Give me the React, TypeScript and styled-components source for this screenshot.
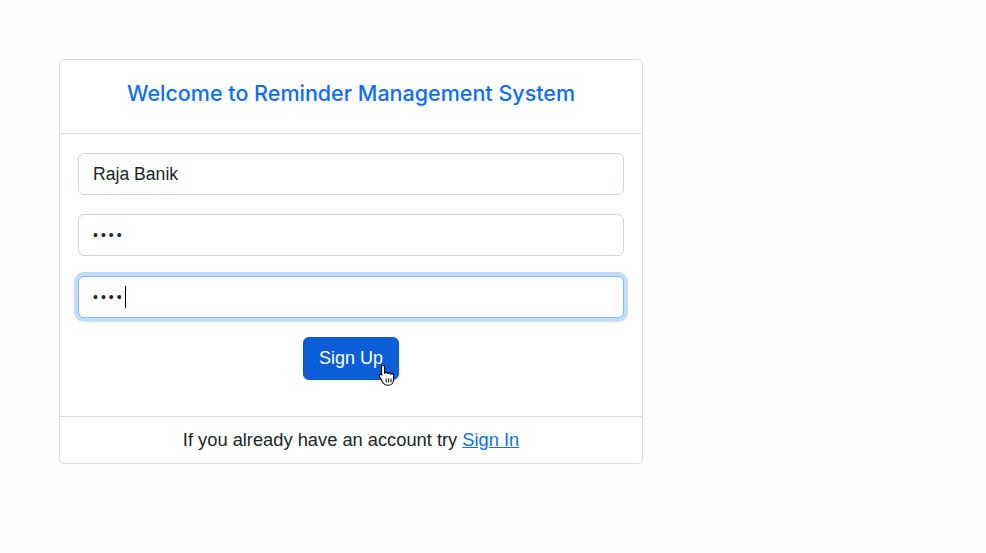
import React from 'react';
import styled, { createGlobalStyle } from 'styled-components';

const GlobalStyle = createGlobalStyle`
  body {
    margin: 0;
    background: #fdfdfd;
    font-family: "Liberation Sans", Arial, sans-serif;
    color: #212529;
  }
`

const Page = styled.div`
  padding: 59px 0 0 59px;
`
const Card = styled.div`
  width: 582px;
  border: 1px solid #dcdcdc;
  border-radius: 5px;
  background: #fff;
  display: flex;
  flex-direction: column;
`
const Header = styled.div`
  height: 73px;
  display: flex;
  align-items: center;
  justify-content: center;
  border-bottom: 1px solid #dcdcdc;
`
const Title = styled.h3`
  margin: 0 0 8px;
  font-family: Inter, "Liberation Sans", sans-serif;
  font-size: 21.5px;
  font-weight: 500;
  color: #0d6efd;
`
const Body = styled.form`
  padding: 19px 18px 36px;
  display: flex;
  flex-direction: column;
  gap: 19px;
`
const Field = styled.div`
  position: relative;
  margin-top: 1px;
`
const Input = styled.input<{ $focused?: boolean }>`
  box-sizing: border-box;
  width: 100%;
  height: 42px;
  padding: 0 14px;
  font-family: inherit;
  font-size: ${p => (p.type === 'password' ? '14px' : '17.6px')};
  color: #212529;
  background: #fff;
  border: 1px solid ${p => (p.$focused ? '#86b7fe' : '#ced4da')};
  border-radius: 6px;
  outline: none;
  box-shadow: ${p => (p.$focused ? '0 0 0 4px rgba(13, 110, 253, 0.25)' : 'none')};
  letter-spacing: ${p => (p.type === 'password' ? '3px' : 'normal')};
`
const Caret = styled.span`
  position: absolute;
  left: 47px;
  top: 10px;
  width: 1px;
  height: 22px;
  background: #000;
`
const Actions = styled.div`
  display: flex;
  justify-content: center;
`
const Button = styled.button`
  position: relative;
  height: 43px;
  padding: 0 15px;
  font-family: inherit;
  font-size: 18px;
  color: #fff;
  background: #0b5ed7;
  border: 1px solid #0a58ca;
  border-radius: 6px;
`
const Pointer = styled.svg`
  position: absolute;
  left: 74px;
  top: 26px;
`
const Footer = styled.div`
  height: 46px;
  border-top: 1px solid #dcdcdc;
  display: flex;
  align-items: center;
  justify-content: center;
  font-size: 18.3px;
  gap: 5px;
`
const Link = styled.a`
  color: #0d6efd;
  text-decoration: underline;
`

export default function App() {
  return (
    <>
      <GlobalStyle />
      <Page>
        <Card>
          <Header><Title>Welcome to Reminder Management System</Title></Header>
          <Body onSubmit={e => e.preventDefault()}>
            <Input type="text" defaultValue="Raja Banik" readOnly />
            <Input type="password" defaultValue="abcd" readOnly />
            <Field>
              <Input type="password" defaultValue="abcd" readOnly $focused />
              <Caret />
            </Field>
            <Actions>
              <Button type="button">
                Sign Up
                <Pointer width="18" height="22" viewBox="0 0 18 22">
                  <path
                    d="M5 1.5c1 0 1.6.7 1.6 1.6v6.2c.3-.6 1-.9 1.6-.9.8 0 1.4.5 1.5 1.2.3-.4.8-.7 1.4-.7.8 0 1.4.5 1.5 1.2.3-.3.8-.5 1.3-.5 1 0 1.6.7 1.6 1.7v4.6c0 2.9-2.1 5.3-5.2 5.3H9.3c-1.8 0-3-.7-4.1-2.2L1.6 13c-.5-.7-.4-1.6.3-2.1.7-.5 1.6-.3 2.1.3l-.6-.8.1.1V3.1C3.4 2.2 4 1.5 5 1.5z"
                    fill="#fff"
                    stroke="#000"
                    strokeWidth="1.1"
                    strokeLinejoin="round"
                  />
                  <path d="M8.2 14.5v4M10.6 14.5v4M13 14.5v4" stroke="#000" strokeWidth="1" />
                </Pointer>
              </Button>
            </Actions>
          </Body>
          <Footer>
            If you already have an account try <Link href="#">Sign In</Link>
          </Footer>
        </Card>
      </Page>
    </>
  );
}
